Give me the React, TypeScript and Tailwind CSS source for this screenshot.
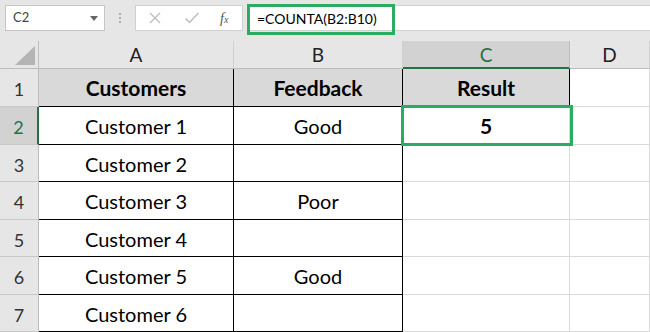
import React from "react";

const font = { fontFamily: "Lato, 'Open Sans', 'Liberation Sans', sans-serif" };

type Cell = { text?: string; bold?: boolean; bg?: string; table?: boolean };

const rows: Cell[][] = [
  [
    { text: "Customers", bold: true, bg: "bg-[#d9d9d9]", table: true },
    { text: "Feedback", bold: true, bg: "bg-[#d9d9d9]", table: true },
    { text: "Result", bold: true, bg: "bg-[#d9d9d9]", table: true },
    {},
  ],
  [{ text: "Customer 1", table: true }, { text: "Good", table: true }, { text: "5", bold: true }, {}],
  [{ text: "Customer 2", table: true }, { table: true }, {}, {}],
  [{ text: "Customer 3", table: true }, { text: "Poor", table: true }, {}, {}],
  [{ text: "Customer 4", table: true }, { table: true }, {}, {}],
  [{ text: "Customer 5", table: true }, { text: "Good", table: true }, {}, {}],
  [{ text: "Customer 6", table: true }, { table: true }, {}, {}],
];

const rowHeights = ["h-[38px]", "h-[38px]", "h-[37px]", "h-[38px]", "h-[37px]", "h-[38px]", "h-[37px]"];
const colWidths = ["w-[195px]", "w-[169px]", "w-[167px]", "w-[80px]"];

export default function App() {
  return (
    <div className="w-[650px] h-[332px] overflow-hidden bg-[#e6e6e6] text-black" style={font}>
      {/* formula bar */}
      <div className="h-[41px] relative flex items-start pt-[5px]">
        <div className="ml-[5px] w-[100px] h-[26px] bg-white border border-[#c6c6c6] flex items-center pl-[7px] pr-[6px]">
          <span className="text-[13px] text-[#444]">C2</span>
          <span className="ml-auto w-0 h-0 border-l-[4px] border-r-[4px] border-t-[5px] border-l-transparent border-r-transparent border-t-[#666]" />
        </div>
        <div className="w-[30px] h-[26px] flex flex-col items-center justify-center gap-[2px]">
          <span className="w-[2px] h-[2px] bg-[#b0b0b0]" />
          <span className="w-[2px] h-[2px] bg-[#b0b0b0]" />
          <span className="w-[2px] h-[2px] bg-[#b0b0b0]" />
        </div>
        <div className="w-[108px] h-[26px] bg-white border border-[#d0d0d0] flex items-center">
          <svg width="14" height="14" viewBox="0 0 14 14" className="ml-[12px]">
            <path d="M2 2 L12 12 M12 2 L2 12" stroke="#bdbdbd" strokeWidth="1.3" fill="none" />
          </svg>
          <svg width="16" height="14" viewBox="0 0 16 14" className="ml-[22px]">
            <path d="M1.5 7.5 L5.5 11.5 L14.5 2" stroke="#bdbdbd" strokeWidth="1.5" fill="none" />
          </svg>
          <span className="ml-[20px] text-[14px] italic text-[#555]" style={{ fontFamily: "'Liberation Serif', serif" }}>
            f<span className="text-[10px]">x</span>
          </span>
        </div>
        <div className="ml-[4px] flex-1 h-[26px] bg-white border-y border-[#d0d0d0] flex items-center pl-[10px]">
          <span className="text-[14px] text-black">=COUNTA(B2:B10)</span>
        </div>
        <div className="absolute left-[247px] top-[4px] w-[148px] h-[31px] border-[3px] border-[#2aad62]" />
      </div>

      {/* sheet */}
      <div className="relative">
        {/* column headers */}
        <div className="flex h-[28px]">
          <div className="w-[39px] h-full relative border-r border-b border-[#bdbdbd] bg-[#e6e6e6]">
            <svg width="39" height="28" viewBox="0 0 39 28" className="absolute left-0 top-0">
              <path d="M35 5 L35 24 L15 24 Z" fill="#b4b4b4" />
            </svg>
          </div>
          {["A", "B", "C", "D"].map((c, i) => {
            const sel = c === "C";
            return (
              <div
                key={c}
                className={`${colWidths[i]} h-full flex items-center justify-center pt-[2px] text-[19px] ${
                  sel
                    ? "bg-[#d2d2d2] border-b-2 border-b-[#217346] text-[#217346] border-r border-r-[#bdbdbd]"
                    : "bg-[#e6e6e6] border-b border-b-[#bdbdbd] border-r border-r-[#d0d0d0] text-[#222]"
                }`}
              >
                {c}
              </div>
            );
          })}
        </div>
        {rows.map((r, ri) => {
          const selRow = ri === 1;
          return (
            <div key={ri} className={`flex ${rowHeights[ri]}`}>
              <div
                className={`w-[39px] h-full flex items-center justify-center pt-[4px] text-[18px] border-b border-b-[#c8c8c8] ${
                  selRow
                    ? "bg-[#d2d2d2] text-[#217346] border-r-2 border-r-[#217346]"
                    : "bg-[#e6e6e6] text-[#333] border-r border-r-[#bdbdbd]"
                }`}
              >
                {ri + 1}
              </div>
              {r.map((cell, ci) => {
                const black = cell.table || (ri === 0 && ci === 2);
                return (
                  <div
                    key={ci}
                    className={`${colWidths[ci]} h-full flex items-center justify-center pt-[1px] border-r border-b ${
                      black ? "border-black" : "border-[#dadada]"
                    } ${cell.bg ?? "bg-white"} ${cell.bold ? "font-bold text-[21px]" : "text-[20px]"}`}
                  >
                    {cell.text}
                  </div>
                );
              })}
            </div>
          );
        })}
        {/* selected cell */}
        <div className="absolute left-[401px] top-[64px] w-[172px] h-[41px] border-[3px] border-[#2aad62]" />
      </div>
    </div>
  );
}
